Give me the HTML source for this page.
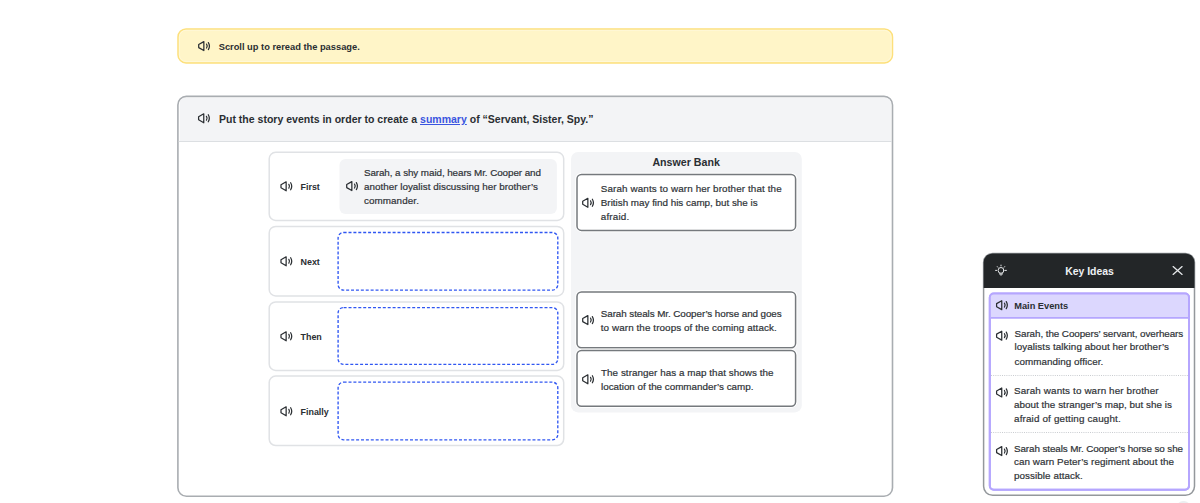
<!DOCTYPE html>
<html><head><meta charset="utf-8">
<style>
*{box-sizing:border-box;margin:0;padding:0}
html,body{width:1200px;height:503px;overflow:hidden;background:#fff;font-family:"Liberation Sans",sans-serif;color:#2d3135}
.abs{position:absolute}
.spk{position:absolute;overflow:visible}
.b{position:absolute;white-space:nowrap;font-weight:bold;color:#2a2e32}
.p{position:absolute;white-space:nowrap;font-size:9.85px;line-height:14px;color:#2e3236;-webkit-text-stroke:0.2px #2e3236}
.row{position:absolute;left:269px;width:295px;height:69px;border:1px solid #e2e4e7;border-radius:7px;background:#fff}
.drop{position:absolute;left:338px;width:220px;height:59px;border:1px dashed #3158f0;border-radius:6px}
.acard{position:absolute;left:576px;width:221px;border:1px solid #73777b;border-radius:5px;background:#fff}
</style></head><body>
<svg width="0" height="0" style="position:absolute">
  <defs>
    <g id="spk" fill="none" stroke="#2b2f33" stroke-width="1.25" stroke-linejoin="round" stroke-linecap="round">
      <path d="M0.6 3.55 L5.75 0.6 L5.75 9.55 L0.6 6.6 Z"/>
      <path d="M8.45 3.1 Q9.8 5.05 8.45 7.0"/>
      <path d="M10.25 1.55 Q12.4 5.05 10.25 8.55"/>
    </g>
  </defs>
</svg>
<svg class="abs" style="left:0;top:0" width="1200" height="503"><rect x="178" y="28.9" width="714.5" height="34" rx="8" fill="#fff5c8" stroke="#fde07c" stroke-width="1.5" /><rect x="179.4" y="30.3" width="711.7" height="31.2" rx="6.6" fill="none" stroke="#fff9dc" stroke-width="0.8" /><clipPath id="cc"><rect x="178.9" y="97.2" width="712.8" height="398.2" rx="7.7"/></clipPath><rect x="177.9" y="96.4" width="714.6" height="399.8" rx="8.5" fill="#fff" stroke="#a9adb1" stroke-width="1.6" /><rect x="179.7" y="98" width="711.2" height="43" fill="#f3f4f6" clip-path="url(#cc)"/><rect x="178.7" y="141" width="713.2" height="1" fill="#dcdfe2"/><rect x="269.2" y="152.3" width="294.5" height="68.1" rx="6.5" fill="#fff" stroke="#e0e2e5" stroke-width="1.5" /><rect x="269.2" y="226.4" width="294.5" height="69.49999999999997" rx="6.5" fill="#fff" stroke="#e0e2e5" stroke-width="1.5" /><rect x="269.2" y="301.9" width="294.5" height="68.5" rx="6.5" fill="#fff" stroke="#e0e2e5" stroke-width="1.5" /><rect x="269.2" y="376.1" width="294.5" height="69.39999999999998" rx="6.5" fill="#fff" stroke="#e0e2e5" stroke-width="1.5" /><rect x="339.5" y="159" width="217.4" height="54.9" rx="6" fill="#f3f4f6" stroke="none" stroke-width="1.5" /><rect x="571" y="152" width="230.8" height="260.4" rx="7" fill="#f3f4f6" stroke="none" stroke-width="1.5" /><rect x="577" y="174.5" width="218.6" height="55.9" rx="4.5" fill="#fff" stroke="#fff" stroke-width="3.5" /><rect x="577" y="174.5" width="218.6" height="55.9" rx="4.5" fill="#fff" stroke="#75797d" stroke-width="1.5" /><rect x="577" y="292" width="218.6" height="55.7" rx="4.5" fill="#fff" stroke="#fff" stroke-width="3.5" /><rect x="577" y="292" width="218.6" height="55.7" rx="4.5" fill="#fff" stroke="#75797d" stroke-width="1.5" /><rect x="577" y="350.4" width="218.6" height="55.8" rx="4.5" fill="#fff" stroke="#fff" stroke-width="3.5" /><rect x="577" y="350.4" width="218.6" height="55.8" rx="4.5" fill="#fff" stroke="#75797d" stroke-width="1.5" /><clipPath id="kc"><rect x="983.6" y="253.4" width="210.9" height="241.9" rx="9"/></clipPath><rect x="983.6" y="253.4" width="210.9" height="241.9" rx="9" fill="#fff" stroke="#94989c" stroke-width="1.5" /><rect x="982" y="252" width="214" height="36" fill="#232628" clip-path="url(#kc)"/><rect x="989.8" y="293.6" width="199.2" height="196.1" rx="4" fill="#fff" stroke="#b5a6fe" stroke-width="2" /><clipPath id="pc"><rect x="989.8" y="293.6" width="199.2" height="196.1" rx="4"/></clipPath><rect x="989.8" y="293.6" width="199.2" height="24.3" fill="#dcd7fe" clip-path="url(#pc)"/><rect x="989.8" y="293.6" width="199.2" height="196.1" rx="4" fill="none" stroke="#b5a6fe" stroke-width="2"/><line x1="990.8" y1="317.9" x2="1188" y2="317.9" stroke="#b5a6fe" stroke-width="1.8"/><line x1="991" y1="375.5" x2="1188" y2="375.5" stroke="#c9ccd0" stroke-width="1" stroke-dasharray="1 1.2"/><line x1="991" y1="432.5" x2="1188" y2="432.5" stroke="#c9ccd0" stroke-width="1" stroke-dasharray="1 1.2"/><rect x="338.1" y="232.5" width="219.7" height="57.60" rx="5.5" fill="none" stroke="#3057f2" stroke-width="1.35" stroke-dasharray="3 1.9" stroke-dashoffset="0"/><rect x="338.1" y="307.55" width="219.7" height="56.85" rx="5.5" fill="none" stroke="#3057f2" stroke-width="1.35" stroke-dasharray="3 1.9" stroke-dashoffset="0"/><rect x="338.1" y="382.15" width="219.7" height="57.75" rx="5.5" fill="none" stroke="#3057f2" stroke-width="1.35" stroke-dasharray="3 1.9" stroke-dashoffset="0"/><use href="#spk" transform="translate(198.10,41.00)"/><use href="#spk" transform="translate(198.00,113.20)"/><use href="#spk" transform="translate(280.40,181.20)"/><use href="#spk" transform="translate(280.40,256.20)"/><use href="#spk" transform="translate(280.40,331.20)"/><use href="#spk" transform="translate(280.40,406.20)"/><use href="#spk" transform="translate(346.10,181.00)"/><use href="#spk" transform="translate(582.10,197.70)"/><use href="#spk" transform="translate(582.10,315.00)"/><use href="#spk" transform="translate(582.10,374.20)"/><use href="#spk" transform="translate(996.00,300.10)"/><use href="#spk" transform="translate(996.00,330.60)"/><use href="#spk" transform="translate(996.00,387.40)"/><use href="#spk" transform="translate(996.00,446.00)"/></svg>

<div class="b" style="left:218.7px;top:39.27px;font-size:9.31px;line-height:16px;">Scroll up to reread the passage.</div>

<div class="b" style="left:219px;top:111.25px;font-size:10.52px;line-height:16px;">Put the story events in order to create a <span style="color:#3a55e0;text-decoration:underline;text-underline-offset:1px">summary</span> of “Servant, Sister, Spy.”</div>

<div class="b" style="left:300.5px;top:179.66px;font-size:8.93px;line-height:14px;">First</div>

<div class="b" style="left:300.5px;top:254.66px;font-size:8.93px;line-height:14px;">Next</div>

<div class="b" style="left:300.5px;top:329.66px;font-size:8.93px;line-height:14px;">Then</div>

<div class="b" style="left:300.5px;top:404.66px;font-size:8.93px;line-height:14px;">Finally</div>

<div class="b" style="left:652.4px;top:154.01px;font-size:10.65px;line-height:16px;">Answer Bank</div>



<div class="b" style="left:1065.2px;top:263.79px;font-size:10.43px;line-height:16px;color:#eef1f4">Key Ideas</div>
<svg class="abs" style="left:993px;top:263px" width="16" height="16" viewBox="0 0 16 16" fill="none" stroke="#e6e8ea" stroke-width="1" stroke-linecap="round"><circle cx="8" cy="7.4" r="2.9"/><path d="M6.9 10.4 L6.9 11.6 Q8 12.6 9.1 11.6 L9.1 10.4"/><path d="M2.6 7.4 H3.6 M12.4 7.4 H13.4 M8 2.1 V2.9 M4.3 3.6 L4.8 4.2 M11.7 3.6 L11.2 4.2"/></svg>
<svg class="abs" style="left:1171px;top:265px" width="13" height="11" viewBox="0 0 13 11" fill="none" stroke="#e6e8ea" stroke-width="1.3" stroke-linecap="round"><path d="M2.1 1.6 L11.1 9.4 M11.1 1.6 L2.1 9.4"/></svg>

<div class="b" style="left:1014.2px;top:298.99px;font-size:9.27px;line-height:14px;">Main Events</div>



<div class="abs" style="left:1177px;top:501px;width:13px;height:6px;border-radius:6px 6px 0 0;background:#eceef0"></div>
<div class="p" style="left:363.9px;top:166.49px;letter-spacing:-0.079px">Sarah, a shy maid, hears Mr. Cooper and</div>
<div class="p" style="left:363.9px;top:179.74px;letter-spacing:0.023px">another loyalist discussing her brother’s</div>
<div class="p" style="left:363.9px;top:193.99px;letter-spacing:0.092px">commander.</div>
<div class="p" style="left:600.8px;top:182.49px;letter-spacing:0.120px">Sarah wants to warn her brother that the</div>
<div class="p" style="left:600.8px;top:196.39px;letter-spacing:-0.006px">British may find his camp, but she is</div>
<div class="p" style="left:600.8px;top:210.29px;letter-spacing:0.173px">afraid.</div>
<div class="p" style="left:600.8px;top:306.89px;letter-spacing:-0.081px">Sarah steals Mr. Cooper’s horse and goes</div>
<div class="p" style="left:600.8px;top:321.49px;letter-spacing:0.091px">to warn the troops of the coming attack.</div>
<div class="p" style="left:601.0px;top:365.79px;letter-spacing:0.047px">The stranger has a map that shows the</div>
<div class="p" style="left:601.0px;top:380.39px;letter-spacing:-0.014px">location of the commander’s camp.</div>
<div class="p" style="left:1014.5px;top:327.39px;letter-spacing:-0.074px">Sarah, the Coopers’ servant, overhears</div>
<div class="p" style="left:1014.5px;top:340.39px;letter-spacing:0.073px">loyalists talking about her brother’s</div>
<div class="p" style="left:1014.5px;top:355.39px;letter-spacing:0.043px">commanding officer.</div>
<div class="p" style="left:1014px;top:384.19px;letter-spacing:0.132px">Sarah wants to warn her brother</div>
<div class="p" style="left:1014px;top:398.29px;letter-spacing:0.037px">about the stranger’s map, but she is</div>
<div class="p" style="left:1014px;top:412.39px;letter-spacing:0.159px">afraid of getting caught.</div>
<div class="p" style="left:1014px;top:442.09px;letter-spacing:-0.096px">Sarah steals Mr. Cooper’s horse so she</div>
<div class="p" style="left:1014px;top:454.99px;letter-spacing:0.049px">can warn Peter’s regiment about the</div>
<div class="p" style="left:1014px;top:468.89px;letter-spacing:0.063px">possible attack.</div>
</body></html>
